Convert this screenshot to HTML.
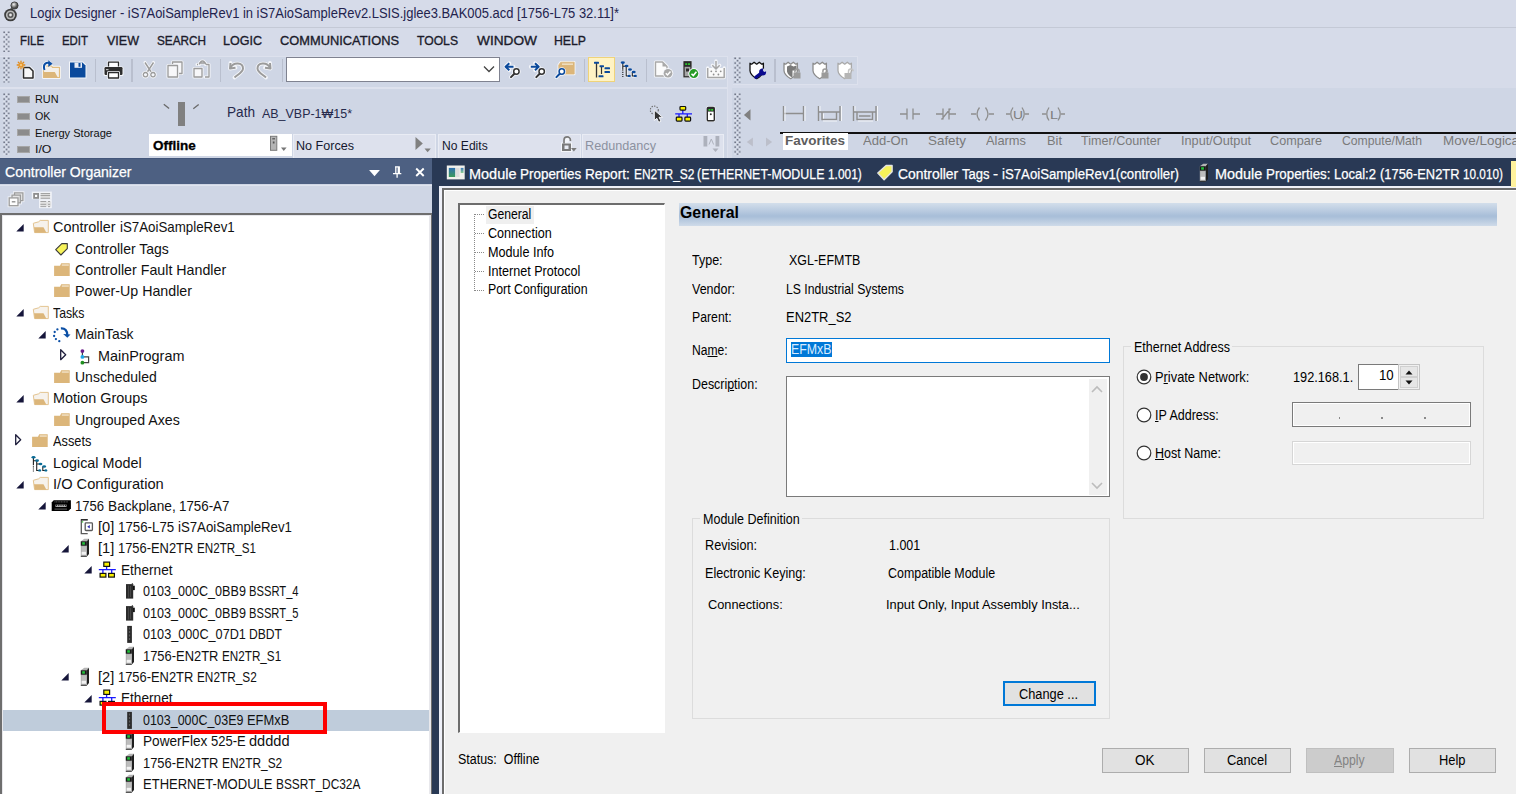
<!DOCTYPE html>
<html><head><meta charset="utf-8"><title>Logix Designer</title>
<style>
html,body{margin:0;padding:0}
body{width:1516px;height:794px;overflow:hidden;position:relative;background:#d6dbe9;font-family:"Liberation Sans","NanumGothic",sans-serif;}
div,span.t,svg{position:absolute;box-sizing:border-box}
span.t{white-space:pre;line-height:1;transform-origin:0 50%;color:#000}
u{text-decoration:underline;text-underline-offset:1px}
</style></head><body>
<div style="left:0px;top:0px;width:1516px;height:27px;background:#d6dbe9"></div>
<div style="left:0px;top:26.5px;width:1516px;height:1.5px;background:#c4c9d6"></div>
<svg style="left:3px;top:1px" width="18" height="22" viewBox="0 0 18 22">
<defs><radialGradient id="gm" cx="40%" cy="35%"><stop offset="0" stop-color="#f2f2f2"/><stop offset="1" stop-color="#4a4a4a"/></radialGradient></defs>
<circle cx="11.500" cy="4.500" r="3.600" fill="url(#gm)" stroke="#333" stroke-width="0.800"/>
<path d="M9.500 7.500 L7 10" stroke="#555" stroke-width="2.500"/>
<circle cx="7.500" cy="14" r="6.300" fill="#3c3c3c"/><circle cx="7.500" cy="14" r="4.600" fill="#b9b9b9"/><circle cx="7.500" cy="14" r="3" fill="#555"/><circle cx="7.500" cy="14" r="1.400" fill="#e6e6e6"/>
</svg>
<span class="t" style="left:30px;top:6px;font-size:14px;color:#23234e;transform:scaleX(0.9244);">Logix Designer - iS7AoiSampleRev1 in iS7AioSampleRev2.LSIS.jglee3.BAK005.acd [1756-L75 32.11]*</span>
<svg style="left:3px;top:30.5px" width="7" height="21"><defs><pattern id="gp1" width="4.600" height="4.800" patternUnits="userSpaceOnUse"><rect x="0.400" y="0.500" width="1.500" height="1.500" fill="#5f6476"/><rect x="2.700" y="2.900" width="1.500" height="1.500" fill="#5f6476"/><rect x="2.700" y="0.500" width="1.500" height="1.500" fill="#e3e7f0"/><rect x="0.400" y="2.900" width="1.500" height="1.500" fill="#e3e7f0"/></pattern></defs><rect width="7" height="21" fill="url(#gp1)"/></svg>
<span class="t" style="left:20px;top:34px;font-size:13px;color:#1b1b2b;transform:scaleX(0.8737);-webkit-text-stroke:0.350px #1b1b2b;">FILE</span>
<span class="t" style="left:62px;top:34px;font-size:13px;color:#1b1b2b;transform:scaleX(0.8776);-webkit-text-stroke:0.350px #1b1b2b;">EDIT</span>
<span class="t" style="left:107px;top:34px;font-size:13px;color:#1b1b2b;transform:scaleX(0.9629);-webkit-text-stroke:0.350px #1b1b2b;">VIEW</span>
<span class="t" style="left:157px;top:34px;font-size:13px;color:#1b1b2b;transform:scaleX(0.9043);-webkit-text-stroke:0.350px #1b1b2b;">SEARCH</span>
<span class="t" style="left:223px;top:34px;font-size:13px;color:#1b1b2b;transform:scaleX(0.9637);-webkit-text-stroke:0.350px #1b1b2b;">LOGIC</span>
<span class="t" style="left:280px;top:34px;font-size:13px;color:#1b1b2b;transform:scaleX(0.9886);-webkit-text-stroke:0.350px #1b1b2b;">COMMUNICATIONS</span>
<span class="t" style="left:417px;top:34px;font-size:13px;color:#1b1b2b;transform:scaleX(0.9351);-webkit-text-stroke:0.350px #1b1b2b;">TOOLS</span>
<span class="t" style="left:477px;top:34px;font-size:13px;color:#1b1b2b;transform:scaleX(1.0518);-webkit-text-stroke:0.350px #1b1b2b;">WINDOW</span>
<span class="t" style="left:554px;top:34px;font-size:13px;color:#1b1b2b;transform:scaleX(0.9420);-webkit-text-stroke:0.350px #1b1b2b;">HELP</span>
<div style="left:0px;top:55.5px;width:728px;height:32px;background:#cfd6e5;border:1px solid #dde1ed;border-left:0"></div>
<div style="left:732.5px;top:55.5px;width:125.5px;height:29.5px;background:#cfd6e5;border:1px solid #dde1ed;border-left:0"></div>
<svg style="left:3px;top:57px" width="7" height="25.5"><defs><pattern id="gp2" width="4.600" height="4.800" patternUnits="userSpaceOnUse"><rect x="0.400" y="0.500" width="1.500" height="1.500" fill="#5f6476"/><rect x="2.700" y="2.900" width="1.500" height="1.500" fill="#5f6476"/><rect x="2.700" y="0.500" width="1.500" height="1.500" fill="#e3e7f0"/><rect x="0.400" y="2.900" width="1.500" height="1.500" fill="#e3e7f0"/></pattern></defs><rect width="7" height="25.5" fill="url(#gp2)"/></svg>
<svg style="left:734.4px;top:57px" width="7" height="25.5"><defs><pattern id="gp3" width="4.600" height="4.800" patternUnits="userSpaceOnUse"><rect x="0.400" y="0.500" width="1.500" height="1.500" fill="#5f6476"/><rect x="2.700" y="2.900" width="1.500" height="1.500" fill="#5f6476"/><rect x="2.700" y="0.500" width="1.500" height="1.500" fill="#e3e7f0"/><rect x="0.400" y="2.900" width="1.500" height="1.500" fill="#e3e7f0"/></pattern></defs><rect width="7" height="25.5" fill="url(#gp3)"/></svg>
<div style="left:94.5px;top:58.5px;width:1.5px;height:23px;background:#b9bfce"></div>
<div style="left:131px;top:58.5px;width:1.5px;height:23px;background:#b9bfce"></div>
<div style="left:219.5px;top:58.5px;width:1.5px;height:23px;background:#b9bfce"></div>
<div style="left:281.5px;top:58.5px;width:1.5px;height:23px;background:#b9bfce"></div>
<div style="left:583.5px;top:58.5px;width:1.5px;height:23px;background:#b9bfce"></div>
<div style="left:645.5px;top:58.5px;width:1.5px;height:23px;background:#b9bfce"></div>
<div style="left:774px;top:58.5px;width:1.5px;height:23px;background:#b9bfce"></div>
<div style="left:286px;top:57px;width:214px;height:25px;background:#fff;border:1px solid #7f8290"></div>
<svg style="left:483px;top:65px" width="12" height="9" viewBox="0 0 12 9"><path d="M1 1.500 L6 6.500 L11 1.500" fill="none" stroke="#444" stroke-width="1.300"/></svg>
<div style="left:588px;top:57px;width:26.5px;height:25px;background:#fff3c4;border:1px solid #efd37a"></div>
<svg style="left:14px;top:58px" width="24" height="24" viewBox="0 0 24 24"><path d="M9.500 9.500 h6 l3.500 3.500 v7 h-9.500 z" fill="#f7f7f7" stroke="#f4f6fa" stroke-width="3.3" stroke-linejoin="round" stroke-linecap="round"/><path d="M9.500 9.500 h6 l3.500 3.500 v7 h-9.500 z" fill="#f7f7f7" stroke="#2b2b2b" stroke-width="1.5" stroke-linejoin="round"/><g stroke="#e08a1a" stroke-width="1.300" stroke-linecap="round"><path d="M7 3.200 v7.600 M3.200 7 h7.600 M4.300 4.300 l5.400 5.400 M9.700 4.300 l-5.400 5.400"/></g><circle cx="7" cy="7" r="2.300" fill="#e89a2e"/><circle cx="7" cy="7" r="0.900" fill="#f7d9a0"/></svg>
<svg style="left:40px;top:58px" width="24" height="24" viewBox="0 0 24 24"><path d="M3.500 8 h8 l1 1.300 h7 v10.200 h-16 z" fill="#f4f0ea" stroke="#f4f6fa" stroke-width="3.0" stroke-linejoin="round" stroke-linecap="round"/><path d="M3.500 8 h8 l1 1.300 h7 v10.200 h-16 z" fill="#f4f0ea" stroke="#e2bd7e" stroke-width="1.2" stroke-linejoin="round"/><path d="M3.300 14 h11.500 l3.200 5.800 h-14.500 z" fill="#dcb67a"/><path d="M4.500 12 C2.500 6 6.500 3.800 10.500 5.500" fill="none" stroke="#f4f6fa" stroke-width="3.600"/><path d="M4.500 12 C2.500 6 6.500 3.800 10 5.300" fill="none" stroke="#0b4fa5" stroke-width="2"/><path d="M8.300 2.300 L12.500 5.800 L8.300 9 Z" fill="#0b4fa5"/></svg>
<svg style="left:67px;top:58px" width="24" height="24" viewBox="0 0 24 24"><path d="M2 3.500 h14 l3.500 3.500 v13.500 h-17.500 z" fill="#f4f6fa"/><path d="M3 4.500 h12.500 l3 3 v12 h-15.500 z" fill="#0b4a9c"/><rect x="7.500" y="4.500" width="7.500" height="5.300" fill="#e9edf6"/><rect x="11.500" y="5" width="2" height="3.800" fill="#0b4a9c"/></svg>
<svg style="left:101px;top:58px" width="24" height="24" viewBox="0 0 24 24"><path d="M7.500 9 v-4.800 h10 v4.800" fill="#fff" stroke="#f4f6fa" stroke-width="3.1" stroke-linejoin="round" stroke-linecap="round"/><path d="M7.500 9 v-4.800 h10 v4.800" fill="#fff" stroke="#2b2b2b" stroke-width="1.3" stroke-linejoin="round"/><rect x="2.500" y="8.500" width="20" height="9.500" rx="1.500" fill="#f4f6fa"/><rect x="3.500" y="9" width="18" height="8" rx="1.200" fill="#2d2d2d"/><rect x="5" y="11" width="2.500" height="1.200" fill="#bbb"/><path d="M7.500 14.500 h10 v5.500 h-10 z" fill="#fff" stroke="#f4f6fa" stroke-width="3.1" stroke-linejoin="round" stroke-linecap="round"/><path d="M7.500 14.500 h10 v5.500 h-10 z" fill="#fff" stroke="#2b2b2b" stroke-width="1.3" stroke-linejoin="round"/></svg>
<svg style="left:137px;top:58px" width="24" height="24" viewBox="0 0 24 24"><path d="M8 4.500 L14.500 14.500 M16.500 4.500 L10 14.500" fill="none" stroke="#f4f6fa" stroke-width="3.2" stroke-linejoin="round" stroke-linecap="round"/><path d="M8 4.500 L14.500 14.500 M16.500 4.500 L10 14.500" fill="none" stroke="#9b9b9b" stroke-width="1.4" stroke-linejoin="round"/><path d="M8.500 14.500 a2.200 2.200 0 1 0 0.010 0 z M16 14.500 a2.200 2.200 0 1 0 0.010 0 z" fill="#f4f6fa" stroke="#f4f6fa" stroke-width="3.1" stroke-linejoin="round" stroke-linecap="round"/><path d="M8.500 14.500 a2.200 2.200 0 1 0 0.010 0 z M16 14.500 a2.200 2.200 0 1 0 0.010 0 z" fill="#f4f6fa" stroke="#9b9b9b" stroke-width="1.3" stroke-linejoin="round"/></svg>
<svg style="left:163px;top:58px" width="24" height="24" viewBox="0 0 24 24"><path d="M9.500 4 h9.500 v11.500 h-9.500 z" fill="#f7f7f9" stroke="#f4f6fa" stroke-width="3.1" stroke-linejoin="round" stroke-linecap="round"/><path d="M9.500 4 h9.500 v11.500 h-9.500 z" fill="#f7f7f9" stroke="#9b9b9b" stroke-width="1.3" stroke-linejoin="round"/><path d="M5 7.500 h9.500 v11.500 h-9.500 z" fill="#f7f7f9" stroke="#f4f6fa" stroke-width="3.1" stroke-linejoin="round" stroke-linecap="round"/><path d="M5 7.500 h9.500 v11.500 h-9.500 z" fill="#f7f7f9" stroke="#9b9b9b" stroke-width="1.3" stroke-linejoin="round"/></svg>
<svg style="left:189px;top:58px" width="24" height="24" viewBox="0 0 24 24"><path d="M9 6.500 h-1 M17 6.500 h3 v12.500 h-4 M10.500 6.500 v-1.500 h6 v1.500 M11.500 5 a2 2 0 0 1 4 0" fill="none" stroke="#f4f6fa" stroke-width="3.1" stroke-linejoin="round" stroke-linecap="round"/><path d="M9 6.500 h-1 M17 6.500 h3 v12.500 h-4 M10.500 6.500 v-1.500 h6 v1.500 M11.500 5 a2 2 0 0 1 4 0" fill="none" stroke="#9b9b9b" stroke-width="1.3" stroke-linejoin="round"/><path d="M5 10.500 h8 v8.500 h-8 z" fill="#f7f7f9" stroke="#f4f6fa" stroke-width="3.1" stroke-linejoin="round" stroke-linecap="round"/><path d="M5 10.500 h8 v8.500 h-8 z" fill="#f7f7f9" stroke="#9b9b9b" stroke-width="1.3" stroke-linejoin="round"/></svg>
<svg style="left:224px;top:58px" width="24" height="24" viewBox="0 0 24 24"><path d="M6.500 5 l-0.500 5.500 l5.500 -0.800 M6.200 10.300 C9.500 3.500 19 4.500 19 10.500 C19 14 14 16.500 10.500 19.500" fill="none" stroke="#f4f6fa" stroke-width="3.8" stroke-linejoin="round" stroke-linecap="round"/><path d="M6.500 5 l-0.500 5.500 l5.500 -0.800 M6.200 10.300 C9.500 3.500 19 4.500 19 10.500 C19 14 14 16.500 10.500 19.500" fill="none" stroke="#9b9b9b" stroke-width="2" stroke-linejoin="round"/></svg>
<svg style="left:252px;top:58px" width="24" height="24" viewBox="0 0 24 24"><path d="M18 5 l0.500 5.500 l-5.500 -0.800 M18.300 10.300 C15 3.500 5.500 4.500 5.500 10.500 C5.500 14 10.500 16.500 14 19.500" fill="none" stroke="#f4f6fa" stroke-width="3.8" stroke-linejoin="round" stroke-linecap="round"/><path d="M18 5 l0.500 5.500 l-5.500 -0.800 M18.300 10.300 C15 3.500 5.500 4.500 5.500 10.500 C5.500 14 10.500 16.500 14 19.500" fill="none" stroke="#9b9b9b" stroke-width="2" stroke-linejoin="round"/></svg>
<svg style="left:500px;top:58px" width="24" height="24" viewBox="0 0 24 24"><path d="M13.500 8.700 h-7.500 M9.300 5.200 L5.600 8.700 L9.300 12.200" fill="none" stroke="#f4f6fa" stroke-width="3.8" stroke-linejoin="round" stroke-linecap="round"/><path d="M13.500 8.700 h-7.500 M9.300 5.200 L5.600 8.700 L9.300 12.200" fill="none" stroke="#0b4a9c" stroke-width="2" stroke-linejoin="round"/><path d="M14.599999999999998 15.5 l-3.600 3.600" stroke="#f4f6fa" stroke-width="3.800" stroke-linecap="round"/><circle cx="16.4" cy="13.5" r="2.700" fill="#f4f6fa" stroke="#f4f6fa" stroke-width="3.200"/><path d="M14.599999999999998 15.5 l-3.600 3.600" stroke="#333" stroke-width="2" stroke-linecap="round"/><circle cx="16.4" cy="13.5" r="2.700" fill="#fdfdfd" stroke="#333" stroke-width="1.500"/></svg>
<svg style="left:526px;top:58px" width="24" height="24" viewBox="0 0 24 24"><path d="M4.800 8.700 h7.500 M9 5.200 L12.700 8.700 L9 12.200" fill="none" stroke="#f4f6fa" stroke-width="3.8" stroke-linejoin="round" stroke-linecap="round"/><path d="M4.800 8.700 h7.500 M9 5.200 L12.700 8.700 L9 12.200" fill="none" stroke="#0b4a9c" stroke-width="2" stroke-linejoin="round"/><path d="M13.899999999999999 15.5 l-3.600 3.600" stroke="#f4f6fa" stroke-width="3.800" stroke-linecap="round"/><circle cx="15.7" cy="13.5" r="2.700" fill="#f4f6fa" stroke="#f4f6fa" stroke-width="3.200"/><path d="M13.899999999999999 15.5 l-3.600 3.600" stroke="#333" stroke-width="2" stroke-linecap="round"/><circle cx="15.7" cy="13.5" r="2.700" fill="#fdfdfd" stroke="#333" stroke-width="1.500"/></svg>
<svg style="left:552px;top:58px" width="24" height="24" viewBox="0 0 24 24"><path d="M6.800 7 l2 -2.800 h13.400 v11.800 h-15.400 z" fill="#dcb67a" stroke="#f4f6fa" stroke-width="2.6" stroke-linejoin="round" stroke-linecap="round"/><path d="M6.800 7 l2 -2.800 h13.400 v11.800 h-15.400 z" fill="#dcb67a" stroke="#dcb67a" stroke-width="0.8" stroke-linejoin="round"/><rect x="10" y="5.500" width="11" height="1.300" fill="#f3e6cf"/><path d="M8.0 15.5 l-3.600 3.600" stroke="#f4f6fa" stroke-width="3.800" stroke-linecap="round"/><circle cx="9.8" cy="13.5" r="2.700" fill="#f4f6fa" stroke="#f4f6fa" stroke-width="3.200"/><path d="M8.0 15.5 l-3.600 3.600" stroke="#0b4a9c" stroke-width="2" stroke-linecap="round"/><circle cx="9.8" cy="13.5" r="2.700" fill="#fdfdfd" stroke="#0b4a9c" stroke-width="1.500"/></svg>
<svg style="left:589px;top:58px" width="24" height="24" viewBox="0 0 24 24"><path d="M7.500 4.500 v15" stroke="#333" stroke-width="1.300"/><path d="M12.500 9 v7" stroke="#333" stroke-width="1.200"/><g fill="#0b4a9c"><rect x="5" y="3.800" width="5" height="2" rx="0.600"/><rect x="10.500" y="7.200" width="4.500" height="2" rx="0.600"/><rect x="15.500" y="9.300" width="5.500" height="2" rx="0.600"/><rect x="15.500" y="13" width="5.500" height="2" rx="0.600"/><rect x="9.500" y="17.300" width="5" height="2" rx="0.600"/></g></svg>
<svg style="left:616px;top:58px" width="24" height="24" viewBox="0 0 24 24"><path d="M6.800 4.500 V11.500 M6.800 8.300 H10 M10.200 8.500 V18 H13 M13.500 11.700 H14.500 M16.300 14 V18 H19" fill="none" stroke="#f4f6fa" stroke-width="2.9000000000000004" stroke-linejoin="round" stroke-linecap="round"/><path d="M6.800 4.500 V11.500 M6.800 8.300 H10 M10.200 8.500 V18 H13 M13.500 11.700 H14.500 M16.300 14 V18 H19" fill="none" stroke="#222" stroke-width="1.1" stroke-linejoin="round"/><path d="M6.800 11.500 V19" stroke="#222" stroke-width="1.100" stroke-dasharray="1.200 1"/><g fill="#0b4a9c"><ellipse cx="6.800" cy="4.600" rx="2.100" ry="1.300"/><ellipse cx="10.500" cy="8" rx="2" ry="1.300"/><ellipse cx="14" cy="11.500" rx="2" ry="1.300"/><ellipse cx="17.700" cy="14" rx="2" ry="1.300"/><ellipse cx="13.200" cy="17.900" rx="1.600" ry="1.200"/><ellipse cx="19.300" cy="17.900" rx="1.600" ry="1.200"/></g></svg>
<svg style="left:650px;top:58px" width="24" height="24" viewBox="0 0 24 24"><path d="M5.500 4 h7 l4.500 4.500 v9.500 h-11.500 z" fill="#fbfbfb" stroke="#f4f6fa" stroke-width="3.2" stroke-linejoin="round" stroke-linecap="round"/><path d="M5.500 4 h7 l4.500 4.500 v9.500 h-11.500 z" fill="#fbfbfb" stroke="#a9a9a9" stroke-width="1.4" stroke-linejoin="round"/><path d="M12.500 4 v4.500 h4.500 z" fill="#a9a9a9"/><circle cx="18" cy="15.200" r="5.300" fill="#f4f6fa"/><circle cx="18" cy="15.200" r="4.300" fill="#a9a9a9"/><path d="M15.800 15.300 l1.700 1.700 l3 -3.600" stroke="#fff" stroke-width="1.500" fill="none"/></svg>
<svg style="left:678px;top:58px" width="24" height="24" viewBox="0 0 24 24"><rect x="5" y="2.800" width="9" height="17" rx="1" fill="#f4f6fa"/><rect x="6" y="3.800" width="7" height="15" fill="#a6a6a6" stroke="#2b2b2b" stroke-width="1.300"/><rect x="6" y="3.800" width="7" height="5" fill="#2b2b2b"/><rect x="7.200" y="5.300" width="2" height="1.600" fill="#2fd02f"/><rect x="10" y="5.300" width="2" height="1.600" fill="#2fd02f"/><rect x="8" y="10.500" width="3" height="3" fill="#2b2b2b"/><circle cx="15.800" cy="15.600" r="5.500" fill="#f4f6fa"/><circle cx="15.800" cy="15.600" r="4.500" fill="#259b25"/><path d="M13.500 15.700 l1.800 1.800 l3.100 -3.800" stroke="#fff" stroke-width="1.600" fill="none"/></svg>
<svg style="left:704px;top:58px" width="24" height="24" viewBox="0 0 24 24"><path d="M3.700 10 v9.500 h16.500 v-9.500" fill="#fafafa" stroke="#f4f6fa" stroke-width="3.3" stroke-linejoin="round" stroke-linecap="round"/><path d="M3.700 10 v9.500 h16.500 v-9.500" fill="#fafafa" stroke="#a6a6a6" stroke-width="1.5" stroke-linejoin="round"/><path d="M12 3 v8 M8.300 7.300 L12 11 L15.700 7.300" fill="none" stroke="#f4f6fa" stroke-width="3.3" stroke-linejoin="round" stroke-linecap="round"/><path d="M12 3 v8 M8.300 7.300 L12 11 L15.700 7.300" fill="none" stroke="#a6a6a6" stroke-width="1.5" stroke-linejoin="round"/><g fill="#8f8f8f"><circle cx="7.300" cy="13.300" r="0.900"/><circle cx="12" cy="13.300" r="0.900"/><circle cx="16.700" cy="13.300" r="0.900"/><circle cx="9.600" cy="16.500" r="0.900"/><circle cx="14.400" cy="16.500" r="0.900"/></g></svg>
<svg style="left:744.5px;top:58px" width="24" height="24" viewBox="0 0 24 24"><path d="M5 5.200 l1.600 1 l2.500 -2 l2.600 2 l2.600 -2 l2.500 2 l1.600 -1 v7.500 q-0.300 4.300 -6.700 8 q-6.400 -3.700 -6.700 -8 z" fill="#fff" stroke="#111" stroke-width="1.300" stroke-linejoin="round"/><path d="M10.800 19.300 L16 15.400" stroke="#0a0a8f" stroke-width="3.200" stroke-linecap="round"/><circle cx="17.600" cy="14.100" r="3.500" fill="#0a0a8f"/><circle cx="19.700" cy="12.100" r="1.800" fill="#cfd6e5"/></svg>
<svg style="left:779px;top:58px" width="24" height="24" viewBox="0 0 24 24"><path d="M5 5.200 l1.600 1 l2.500 -2 l2.600 2 l2.600 -2 l2.500 2 l1.600 -1 v7.500 q-0.300 4.300 -6.700 8 q-6.400 -3.700 -6.700 -8 z" fill="#fff" stroke="#8c8c8c" stroke-width="1.300" stroke-linejoin="round"/><path d="M8 8.500 l3.500 -1.500 l3 1.500 l3 -1 v5 h-4 v7 q-4.500 -2 -5.500 -6 z" fill="#7a7a7a"/><rect x="14.5" y="14.500" width="7" height="6" fill="#9a9a9a"/><path d="M15.9 14.500 v-1.300 a2.100 2.100 0 0 1 4.200 0 v1.300" fill="none" stroke="#9a9a9a" stroke-width="1.500"/></svg>
<svg style="left:807.5px;top:58px" width="24" height="24" viewBox="0 0 24 24"><path d="M5 5.200 l1.600 1 l2.500 -2 l2.600 2 l2.600 -2 l2.500 2 l1.600 -1 v7.500 q-0.300 4.300 -6.700 8 q-6.400 -3.700 -6.700 -8 z" fill="#fff" stroke="#8c8c8c" stroke-width="1.300" stroke-linejoin="round"/><rect x="13.5" y="14.500" width="7" height="6" fill="#9a9a9a"/><path d="M14.9 14.500 v-1.300 a2.100 2.100 0 0 1 4.200 0 v1.300" fill="none" stroke="#9a9a9a" stroke-width="1.500"/></svg>
<svg style="left:833px;top:58px" width="24" height="24" viewBox="0 0 24 24"><path d="M5 5.200 l1.600 1 l2.500 -2 l2.600 2 l2.600 -2 l2.500 2 l1.600 -1 v7.500 q-0.300 4.300 -6.700 8 q-6.400 -3.700 -6.700 -8 z" fill="#fff" stroke="#a9a9a9" stroke-width="1.300" stroke-linejoin="round"/><rect x="11.500" y="15" width="7" height="6" fill="#b5b5b5"/><path d="M15.500 15 v-1.800 a2.300 2.300 0 0 1 4.600 0" fill="none" stroke="#c4c4c4" stroke-width="1.500"/></svg>
<div style="left:0px;top:87.3px;width:728px;height:70.7px;background:#cfd6e5;border-top:2.200px solid #dde1ed;border-right:1px solid #dde1ed"></div>
<div style="left:732px;top:88px;width:784px;height:70px;background:#cfd6e5"></div>
<svg style="left:3px;top:92.5px" width="7" height="62"><defs><pattern id="gp4" width="4.600" height="4.800" patternUnits="userSpaceOnUse"><rect x="0.400" y="0.500" width="1.500" height="1.500" fill="#5f6476"/><rect x="2.700" y="2.900" width="1.500" height="1.500" fill="#5f6476"/><rect x="2.700" y="0.500" width="1.500" height="1.500" fill="#e3e7f0"/><rect x="0.400" y="2.900" width="1.500" height="1.500" fill="#e3e7f0"/></pattern></defs><rect width="7" height="62" fill="url(#gp4)"/></svg>
<svg style="left:734.4px;top:92.5px" width="7" height="62"><defs><pattern id="gp5" width="4.600" height="4.800" patternUnits="userSpaceOnUse"><rect x="0.400" y="0.500" width="1.500" height="1.500" fill="#5f6476"/><rect x="2.700" y="2.900" width="1.500" height="1.500" fill="#5f6476"/><rect x="2.700" y="0.500" width="1.500" height="1.500" fill="#e3e7f0"/><rect x="0.400" y="2.900" width="1.500" height="1.500" fill="#e3e7f0"/></pattern></defs><rect width="7" height="62" fill="url(#gp5)"/></svg>
<div style="left:17px;top:95.9px;width:13px;height:7px;background:#8c8c8c;border:1px solid #a6a6a6"></div>
<span class="t" style="left:34.5px;top:94px;font-size:11.5px;color:#111;transform:scaleX(0.9429);">RUN</span>
<div style="left:17px;top:112.6px;width:13px;height:7px;background:#8c8c8c;border:1px solid #a6a6a6"></div>
<span class="t" style="left:34.5px;top:111px;font-size:11.5px;color:#111;transform:scaleX(0.9323);">OK</span>
<div style="left:17px;top:129.3px;width:13px;height:7px;background:#8c8c8c;border:1px solid #a6a6a6"></div>
<span class="t" style="left:34.5px;top:128px;font-size:11.5px;color:#111;transform:scaleX(0.9634);">Energy Storage</span>
<div style="left:17px;top:146.0px;width:13px;height:7px;background:#8c8c8c;border:1px solid #a6a6a6"></div>
<span class="t" style="left:34.5px;top:144px;font-size:11.5px;color:#111;transform:scaleX(1.0754);">I/O</span>
<div style="left:177.5px;top:102.3px;width:7.5px;height:23.5px;background:#808080"></div>
<svg style="left:162px;top:102px" width="40" height="10" viewBox="0 0 40 10"><path d="M1.800 2.200 l5.300 4.400 M36.700 2.500 l-5.400 4.300" stroke="#6a6a6a" stroke-width="1.300"/></svg>
<span class="t" style="left:227px;top:104px;font-size:15px;color:#262a4c;transform:scaleX(0.9073);">Path</span>
<span class="t" style="left:262px;top:108px;font-size:12.5px;color:#262a4c;transform:scaleX(0.9964);">AB_VBP-1₩15*</span>
<div style="left:149px;top:133.5px;width:142.5px;height:22.5px;background:#fff"></div>
<span class="t" style="left:152.5px;top:139px;font-size:13px;font-weight:bold;transform:scaleX(1.0371);-webkit-text-stroke:0.300px #000;">Offline</span>
<svg style="left:268px;top:134px" width="22" height="20" viewBox="0 0 22 20"><rect x="2.500" y="2.300" width="6.300" height="14" fill="#b4b4b4" stroke="#7a7a7a" stroke-width="1"/><rect x="4.300" y="4" width="2.700" height="1.500" fill="#666"/><rect x="4.800" y="7.500" width="1.700" height="2" fill="#555"/><path d="M13 13.500 h5.600 l-2.800 3.500 z" fill="#777"/></svg>
<div style="left:293px;top:133.5px;width:142.5px;height:24.5px;background:#dde1ed;border:1.500px solid #e9ecf4;border-bottom:0"></div>
<div style="left:437.5px;top:133.5px;width:143px;height:24.5px;background:#dde1ed;border:1.500px solid #e9ecf4;border-bottom:0"></div>
<div style="left:582px;top:133.5px;width:142px;height:24.5px;background:#dde1ed;border:1.500px solid #e9ecf4;border-bottom:0"></div>
<span class="t" style="left:296px;top:139px;font-size:13px;color:#15192f;transform:scaleX(0.9672);">No Forces</span>
<svg style="left:413px;top:135px" width="22" height="20" viewBox="0 0 22 20"><path d="M2.500 2 v13 l7.300 -6.500 z" fill="#808080"/><path d="M11.500 13.500 h6.300 l-3.150 3.700 z" fill="#808080"/></svg>
<span class="t" style="left:442px;top:139px;font-size:13px;color:#15192f;transform:scaleX(0.9300);">No Edits</span>
<svg style="left:558px;top:134px" width="22" height="20" viewBox="0 0 22 20"><g stroke="#f4f6fa" stroke-width="2" fill="#f4f6fa"><path d="M6 9.500 v-3.500 a3.200 3.200 0 0 1 6.400 0 v1"/><rect x="4" y="9.500" width="9" height="7.500"/></g><path d="M6 9.500 v-3.500 a3.200 3.200 0 0 1 6.400 0 v1" fill="none" stroke="#7a7a7a" stroke-width="1.700"/><rect x="4" y="9.500" width="9" height="7.500" fill="#7a7a7a"/><rect x="6.500" y="11.500" width="4" height="3.500" fill="#e9ecf4"/><path d="M13 14 h5.700 l-2.850 3.500 z" fill="#7a7a7a"/></svg>
<span class="t" style="left:585px;top:139px;font-size:13px;color:#8c91a0;transform:scaleX(0.9726);">Redundancy</span>
<svg style="left:702px;top:135px" width="22" height="20" viewBox="0 0 22 20"><rect x="1.500" y="1" width="3.800" height="10.500" fill="#adb1bc"/><rect x="13.500" y="1" width="3.800" height="10.500" fill="#adb1bc"/><path d="M7 9.500 l2.300 -5.500 l2.300 5.500" stroke="#adb1bc" fill="none"/><path d="M10.500 13.500 h6 l-3 3.500 z" fill="#adb1bc"/></svg>
<svg style="left:646px;top:102px" width="22" height="22" viewBox="0 0 22 22"><g fill="none" stroke="#6a6a6a" stroke-width="1.100" stroke-dasharray="1.300 1.300"><circle cx="8.300" cy="8.100" r="4"/></g><path d="M8.300 8.100 v10.500 l2.500 -2.300 l1.900 4 l2.300 -1.100 l-1.900 -3.900 h3.600 z" fill="#333" stroke="#f4f6fa" stroke-width="1" stroke-linejoin="round"/></svg>
<svg style="left:672px;top:102px" width="22" height="22" viewBox="0 0 22 22"><path d="M10.800 8 v3.800 M7 11.800 v3.500 M15.300 11.800 v3.500 M3.200 11.800 H20" stroke="#1a1aff" stroke-width="1.300" fill="none"/><rect x="8" y="4.500" width="5.700" height="3.600" rx="0.800" fill="#f7ef00" stroke="#111" stroke-width="1.200"/><rect x="4.300" y="15.100" width="5.700" height="4" rx="0.800" fill="#f7ef00" stroke="#111" stroke-width="1.200"/><rect x="12.900" y="15.100" width="5.700" height="4" rx="0.800" fill="#f7ef00" stroke="#111" stroke-width="1.200"/></svg>
<svg style="left:703px;top:102px" width="16" height="22" viewBox="0 0 16 22"><rect x="3.200" y="4.300" width="9.200" height="15.600" rx="1.800" fill="#f4f6fa"/><rect x="4.300" y="5.400" width="7" height="13.400" rx="1" fill="#fff" stroke="#2e2e2e" stroke-width="1.400"/><rect x="4.300" y="5.400" width="7" height="4.200" fill="#2e2e2e"/><rect x="5.500" y="7" width="1.900" height="1.700" fill="#2fd02f"/><rect x="8.200" y="7" width="1.900" height="1.700" fill="#2fd02f"/><circle cx="7.800" cy="12.200" r="1" fill="#2e2e2e"/></svg>
<svg style="left:743px;top:108px" width="9" height="14" viewBox="0 0 9 14"><path d="M7.500 1.300 v11.200 l-6.600 -5.600 z" fill="#808080"/></svg>
<svg style="left:746px;top:136px" width="8" height="12" viewBox="0 0 8 12"><path d="M6.900 1.600 v9 l-6.100 -4.500 z" fill="#bcbfca"/></svg>
<svg style="left:765px;top:136px" width="8" height="12" viewBox="0 0 8 12"><path d="M1 1.600 v9 l6.100 -4.500 z" fill="#bcbfca"/></svg>
<svg style="left:782px;top:105px" width="24" height="18" viewBox="0 0 24 18"><path d="M1.500 1 v15 M21.500 1 v15 M1.500 8.500 h20" stroke="#8e8e8e" stroke-width="1.400" fill="none"/><path d="M3 1 v15 M23 1 v15" stroke="#f4f6fa" stroke-width="1" fill="none"/></svg>
<svg style="left:817px;top:105px" width="26" height="18" viewBox="0 0 26 18"><path d="M1.500 1 v15 M23 1 v15 M1.500 7 h21.500 M5 7 v7.500 h14.500 v-7.500" stroke="#8e8e8e" stroke-width="1.400" fill="none"/><path d="M3 1 v5 M24.500 1 v15 M6.500 8.500 v5 M6 16 h14" stroke="#f4f6fa" stroke-width="1" fill="none"/></svg>
<svg style="left:852px;top:105px" width="27" height="18" viewBox="0 0 27 18"><path d="M1.500 1 v15 M24 1 v15 M1.500 7 h22.500 M5 7 v7.500 h15.500 v-7.500 M7 11 h11.500" stroke="#8e8e8e" stroke-width="1.400" fill="none"/><path d="M3 1 v5 M25.500 1 v15 M6 16 h15" stroke="#f4f6fa" stroke-width="1" fill="none"/></svg>
<svg style="left:900px;top:107px" width="20" height="14" viewBox="0 0 20 14"><path d="M0 7 h7 M13 7 h7 M7 1.500 v11 M13 1.500 v11" stroke="#8e8e8e" stroke-width="1.300"/></svg>
<svg style="left:936px;top:107px" width="20" height="14" viewBox="0 0 20 14"><path d="M0 7 h7 M13 7 h7 M7 1.500 v11 M13 1.500 v11 M5.500 12.500 l9 -11" stroke="#8e8e8e" stroke-width="1.300"/></svg>
<svg style="left:971px;top:106px" width="23" height="16" viewBox="0 0 23 16"><path d="M0 8 h5 M18 8 h5 M8.500 1.500 q-5 6.500 0 13 M14.500 1.500 q5 6.500 0 13" stroke="#8e8e8e" stroke-width="1.300" fill="none"/></svg>
<svg style="left:1006px;top:106px" width="23" height="16" viewBox="0 0 23 16"><path d="M0 8 h4 M19 8 h4 M7 1.500 q-4.500 6.500 0 13 M16 1.500 q4.500 6.500 0 13" stroke="#8e8e8e" stroke-width="1.300" fill="none"/></svg>
<span class="t" style="left:1012.5px;top:110px;font-size:11.5px;color:#7d7d7d;transform:scaleX(1.2030);">U</span>
<svg style="left:1042px;top:106px" width="23" height="16" viewBox="0 0 23 16"><path d="M0 8 h4 M19 8 h4 M7 1.500 q-4.500 6.500 0 13 M16 1.500 q4.500 6.500 0 13" stroke="#8e8e8e" stroke-width="1.300" fill="none"/></svg>
<span class="t" style="left:1049.5px;top:110px;font-size:11.5px;color:#7d7d7d;transform:scaleX(1.2488);">L</span>
<div style="left:780px;top:131.5px;width:736px;height:2px;background:#111"></div>
<div style="left:782.5px;top:133px;width:65.5px;height:16.5px;background:#fff"></div>
<span class="t" style="left:785px;top:134px;font-size:13.5px;font-weight:bold;color:#5d5d5d;transform:scaleX(0.9995);">Favorites</span>
<span class="t" style="left:862.5px;top:134px;font-size:13.5px;color:#7a7a7a;transform:scaleX(0.9671);">Add-On</span>
<span class="t" style="left:927.5px;top:134px;font-size:13.5px;color:#7a7a7a;transform:scaleX(0.9927);">Safety</span>
<span class="t" style="left:986px;top:134px;font-size:13.5px;color:#7a7a7a;transform:scaleX(0.9520);">Alarms</span>
<span class="t" style="left:1046.5px;top:134px;font-size:13.5px;color:#7a7a7a;transform:scaleX(0.9514);">Bit</span>
<span class="t" style="left:1081px;top:134px;font-size:13.5px;color:#7a7a7a;transform:scaleX(0.9326);">Timer/Counter</span>
<span class="t" style="left:1181px;top:134px;font-size:13.5px;color:#7a7a7a;transform:scaleX(0.9420);">Input/Output</span>
<span class="t" style="left:1270px;top:134px;font-size:13.5px;color:#7a7a7a;transform:scaleX(0.9364);">Compare</span>
<span class="t" style="left:1342px;top:134px;font-size:13.5px;color:#7a7a7a;transform:scaleX(0.9035);">Compute/Math</span>
<span class="t" style="left:1443px;top:134px;font-size:13.5px;color:#7a7a7a;transform:scaleX(0.9931);">Move/Logical</span>
<div style="left:0px;top:158px;width:432px;height:26px;background:#4d6082;border-top:1px solid #43567a"></div>
<span class="t" style="left:5px;top:165px;font-size:14px;color:#fff;transform:scaleX(1.0035);-webkit-text-stroke:0.250px #fff;">Controller Organizer</span>
<svg style="left:367px;top:162px" width="16" height="18" viewBox="0 0 16 18"><path d="M2.100 7.900 H12.900 L7.500 14.200 Z" fill="#fff"/></svg>
<svg style="left:390px;top:162px" width="14" height="18" viewBox="0 0 14 18"><path d="M5 4.800 H9.800 M5.800 4.800 V11 M9.300 4.800 V11.500 M8.300 4.800 V11 M3 11.600 H11.300 M7.100 12 V15.800" stroke="#fff" stroke-width="1.300" fill="none"/></svg>
<svg style="left:412px;top:162px" width="16" height="18" viewBox="0 0 16 18"><path d="M4.200 6.500 L11.700 14 M11.700 6.500 L4.200 14" stroke="#fff" stroke-width="1.900"/></svg>
<div style="left:0px;top:183.5px;width:432px;height:30px;background:#cfd6e5"></div>
<div style="left:0px;top:184.5px;width:432px;height:1.5px;background:#dfe4ee"></div>
<svg style="left:6px;top:190px" width="20" height="18" viewBox="0 0 20 18"><g fill="#fdfdfd" stroke="#f1f3f8" stroke-width="3"><rect x="8.500" y="2.800" width="8.400" height="7.800"/><rect x="6" y="5.100" width="8.400" height="7.800"/><rect x="3.200" y="7.900" width="8.800" height="7.800"/></g><g fill="#fdfdfd" stroke="#9c9c9c" stroke-width="1.300"><path d="M8.500 5 V2.800 H16.900 V10.600 H14.600" fill="#e4e4e4"/><path d="M6 7.800 V5.100 H14.400 V12.900 H12.200" fill="#e4e4e4"/><rect x="3.200" y="7.900" width="8.800" height="7.800"/></g><path d="M5.800 11.800 H9.400" stroke="#8a8a8a" stroke-width="1.300"/></svg>
<svg style="left:31px;top:190px" width="22" height="19" viewBox="0 0 22 19"><rect x="0.800" y="1.600" width="20" height="7.600" fill="#f1f3f8"/><rect x="8" y="9.200" width="12.800" height="9" fill="#f1f3f8"/><rect x="2.200" y="3" width="5.800" height="5.800" fill="#8e8e8e"/><rect x="4" y="4.800" width="2.200" height="2.200" fill="#fff"/><rect x="9.600" y="3.800" width="9.500" height="4.300" fill="#dcdcdc"/><path d="M9.600 3.500 H19.100 M9.600 5.500 H19.100 M9.600 8.300 H19.100" stroke="#9a9a9a" stroke-width="0.900"/><rect x="9.400" y="11.700" width="10.700" height="4.600" fill="#e2e2e2"/><path d="M9.400 11.500 H15.200 M17 11.500 H19.100 M9.400 14.300 H15.200 M17 14.300 H19.100 M9.400 16.600 H15.200 M17 16.600 H19.100" stroke="#9a9a9a" stroke-width="0.900"/></svg>
<div style="left:0px;top:213px;width:432px;height:581px;background:#6e6e6e"></div>
<div style="left:2px;top:215px;width:429px;height:579px;background:#e8e8ec"></div>
<div style="left:3px;top:215.5px;width:426px;height:579px;background:#fff"></div>
<svg style="left:15px;top:222.6px" width="10" height="10" viewBox="0 0 10 10"><path d="M8.700 1 V8.400 H1.300 Z" fill="#16163a"/></svg>
<svg style="left:29px;top:217.1px" width="24" height="20" viewBox="0 0 24 20"><path d="M4.3 6.300 L9.700 4.800 L11.200 3.400 H19.300 V15.600 H5.600 Z" fill="#f6f2ec" stroke="#e3c491" stroke-width="1"/><path d="M5 10.200 H14.500 L17.400 15.800 H5.800 Z" fill="#dcb67a"/></svg>
<span class="t" style="left:53px;top:219px;font-size:15px;color:#111;transform:scaleX(0.9624);">Controller </span>
<span class="t" style="left:119.6px;top:219px;font-size:15px;color:#111;transform:scaleX(0.8874);">iS7AoiSampleRev1</span>
<svg style="left:51px;top:238.5px" width="24" height="20" viewBox="0 0 24 20"><path d="M4.700 10.700 L10.800 4.600 H16.300 V9.600 L9.900 16 Z" fill="#f7f35a" stroke="#3a3a3a" stroke-width="1.100" stroke-linejoin="round"/></svg>
<span class="t" style="left:75px;top:241px;font-size:15px;color:#111;transform:scaleX(0.9323);">Controller Tags</span>
<svg style="left:51px;top:259.9px" width="24" height="20" viewBox="0 0 24 20"><path d="M3.100 5.700 H9 L10.200 3.300 H18.700 V16.100 H3.100 Z" fill="#dcb67a"/><rect x="10.800" y="4.400" width="7" height="1.300" fill="#f3e6cf"/></svg>
<span class="t" style="left:75px;top:262px;font-size:15px;color:#111;transform:scaleX(0.9495);">Controller Fault Handler</span>
<svg style="left:51px;top:281.4px" width="24" height="20" viewBox="0 0 24 20"><path d="M3.100 5.700 H9 L10.200 3.300 H18.700 V16.100 H3.100 Z" fill="#dcb67a"/><rect x="10.800" y="4.400" width="7" height="1.300" fill="#f3e6cf"/></svg>
<span class="t" style="left:75px;top:283px;font-size:15px;color:#111;transform:scaleX(0.9482);">Power-Up Handler</span>
<svg style="left:15px;top:308.3px" width="10" height="10" viewBox="0 0 10 10"><path d="M8.700 1 V8.400 H1.300 Z" fill="#16163a"/></svg>
<svg style="left:29px;top:302.8px" width="24" height="20" viewBox="0 0 24 20"><path d="M4.3 6.300 L9.700 4.800 L11.200 3.400 H19.300 V15.600 H5.600 Z" fill="#f6f2ec" stroke="#e3c491" stroke-width="1"/><path d="M5 10.200 H14.500 L17.400 15.800 H5.800 Z" fill="#dcb67a"/></svg>
<span class="t" style="left:53px;top:305px;font-size:15px;color:#111;transform:scaleX(0.8189);">Tasks</span>
<svg style="left:37px;top:329.7px" width="10" height="10" viewBox="0 0 10 10"><path d="M8.700 1 V8.400 H1.300 Z" fill="#16163a"/></svg>
<svg style="left:51px;top:324.2px" width="24" height="20" viewBox="0 0 24 20"><g fill="#0b4fa5"><circle cx="6.400" cy="5.400" r="1.150"/><circle cx="3.700" cy="8" r="1.150"/><circle cx="3.100" cy="12" r="1.150"/><circle cx="4.900" cy="15.100" r="1.150"/><circle cx="8.300" cy="17.200" r="1.150"/></g><path d="M9.900 4.300 C14 4 16.500 7 16.300 11.500" fill="none" stroke="#0b4fa5" stroke-width="2.300"/><path d="M12.200 10 L16.300 13.800 L19.500 10.500 Z" fill="#0b4fa5"/></svg>
<span class="t" style="left:75px;top:326px;font-size:15px;color:#111;transform:scaleX(0.9233);">MainTask</span>
<svg style="left:59.4px;top:347.6px" width="9" height="14" viewBox="0 0 9 14"><path d="M1.700 1.700 V11.700 L6.700 6.700 Z" fill="#fff" stroke="#1e1e3c" stroke-width="1.300" stroke-linejoin="round"/></svg>
<svg style="left:74px;top:345.6px" width="24" height="20" viewBox="0 0 24 20"><path d="M8.400 5.100 V10.900 H14.600 V16.700 H8.400" stroke="#444" stroke-width="1.200" fill="none"/><circle cx="8.400" cy="5.100" r="1.900" fill="#6a1b8a"/><circle cx="8.400" cy="10.900" r="1.900" fill="#1ea7e8"/><circle cx="8.400" cy="16.700" r="1.900" fill="#1e8e1e"/></svg>
<span class="t" style="left:98px;top:348px;font-size:15px;color:#111;transform:scaleX(0.9597);">MainProgram</span>
<svg style="left:51px;top:367.0px" width="24" height="20" viewBox="0 0 24 20"><path d="M3.100 5.700 H9 L10.200 3.300 H18.700 V16.100 H3.100 Z" fill="#dcb67a"/><rect x="10.800" y="4.400" width="7" height="1.300" fill="#f3e6cf"/></svg>
<span class="t" style="left:75px;top:369px;font-size:15px;color:#111;transform:scaleX(0.9330);">Unscheduled</span>
<svg style="left:15px;top:394.0px" width="10" height="10" viewBox="0 0 10 10"><path d="M8.700 1 V8.400 H1.300 Z" fill="#16163a"/></svg>
<svg style="left:29px;top:388.5px" width="24" height="20" viewBox="0 0 24 20"><path d="M4.3 6.300 L9.700 4.800 L11.200 3.400 H19.300 V15.600 H5.600 Z" fill="#f6f2ec" stroke="#e3c491" stroke-width="1"/><path d="M5 10.200 H14.500 L17.400 15.800 H5.800 Z" fill="#dcb67a"/></svg>
<span class="t" style="left:53px;top:390px;font-size:15px;color:#111;transform:scaleX(0.9594);">Motion Groups</span>
<svg style="left:51px;top:409.9px" width="24" height="20" viewBox="0 0 24 20"><path d="M3.100 5.700 H9 L10.200 3.300 H18.700 V16.100 H3.100 Z" fill="#dcb67a"/><rect x="10.800" y="4.400" width="7" height="1.300" fill="#f3e6cf"/></svg>
<span class="t" style="left:75px;top:412px;font-size:15px;color:#111;transform:scaleX(0.9448);">Ungrouped Axes</span>
<svg style="left:14.4px;top:433.3px" width="9" height="14" viewBox="0 0 9 14"><path d="M1.700 1.700 V11.700 L6.700 6.700 Z" fill="#fff" stroke="#1e1e3c" stroke-width="1.300" stroke-linejoin="round"/></svg>
<svg style="left:29px;top:431.3px" width="24" height="20" viewBox="0 0 24 20"><path d="M3.100 5.700 H9 L10.200 3.300 H18.700 V16.100 H3.100 Z" fill="#dcb67a"/><rect x="10.800" y="4.400" width="7" height="1.300" fill="#f3e6cf"/></svg>
<span class="t" style="left:53px;top:433px;font-size:15px;color:#111;transform:scaleX(0.8530);">Assets</span>
<svg style="left:29px;top:452.7px" width="24" height="20" viewBox="0 0 24 20"><path d="M4.400 4.500 V11" stroke="#222" stroke-width="1.100" fill="none"/><path d="M4.400 11 V18.500" stroke="#222" stroke-width="1.100" stroke-dasharray="1.200 1" fill="none"/><path d="M4.400 7.800 H8 M7.700 8 V17.500 H10.500 M11 11.200 H12 M13.800 13.500 V17.500 H16.500 M8 11 H11" stroke="#222" stroke-width="1.100" fill="none"/><g fill="#0b6c96"><ellipse cx="4.500" cy="4.200" rx="2" ry="1.300"/><ellipse cx="8.100" cy="7.600" rx="1.900" ry="1.300"/><ellipse cx="11.500" cy="11" rx="1.900" ry="1.300"/><ellipse cx="15.200" cy="13.500" rx="1.900" ry="1.300"/><ellipse cx="10.700" cy="17.400" rx="1.500" ry="1.200"/><ellipse cx="16.800" cy="17.400" rx="1.500" ry="1.200"/></g></svg>
<span class="t" style="left:53px;top:455px;font-size:15px;color:#111;transform:scaleX(0.9572);">Logical Model</span>
<svg style="left:15px;top:479.6px" width="10" height="10" viewBox="0 0 10 10"><path d="M8.700 1 V8.400 H1.300 Z" fill="#16163a"/></svg>
<svg style="left:29px;top:474.1px" width="24" height="20" viewBox="0 0 24 20"><path d="M4.3 6.300 L9.700 4.800 L11.200 3.400 H19.300 V15.600 H5.600 Z" fill="#f6f2ec" stroke="#e3c491" stroke-width="1"/><path d="M5 10.200 H14.500 L17.400 15.800 H5.800 Z" fill="#dcb67a"/></svg>
<span class="t" style="left:53px;top:476px;font-size:15px;color:#111;transform:scaleX(0.9761);">I/O Configuration</span>
<svg style="left:37px;top:501.1px" width="10" height="10" viewBox="0 0 10 10"><path d="M8.700 1 V8.400 H1.300 Z" fill="#16163a"/></svg>
<svg style="left:51px;top:495.6px" width="24" height="20" viewBox="0 0 24 20"><path d="M2.700 4.300 H19.900 V12.500 L17.400 15 H0.700 V6.400 Z" fill="#000"/><path d="M3.500 5.900 H17" stroke="#9a9a9a" stroke-width="0.700" stroke-dasharray="1 0.600"/><rect x="4.500" y="8.600" width="11" height="2.300" fill="#c4c4c4"/><path d="M5.500 8.600 v1.500 M7.300 8.600 v1.500 M9.100 8.600 v1.500 M10.900 8.600 v1.500 M12.700 8.600 v1.500 M14.500 8.600 v1.500" stroke="#000" stroke-width="0.800"/><path d="M3.500 13.100 H16" stroke="#8a8a8a" stroke-width="0.700"/></svg>
<span class="t" style="left:75px;top:498px;font-size:15px;color:#111;transform:scaleX(0.8736);">1756 </span>
<span class="t" style="left:107.8px;top:498px;font-size:15px;color:#111;transform:scaleX(0.9121);">Backplane, </span>
<span class="t" style="left:179.3px;top:498px;font-size:15px;color:#111;transform:scaleX(0.8886);">1756-A7</span>
<svg style="left:74px;top:517.0px" width="24" height="20" viewBox="0 0 24 20"><path d="M13.700 2.800 H7.300 V16.600 H13.700" fill="none" stroke="#5a5a5a" stroke-width="1.300"/><path d="M7 2.700 H13.700" stroke="#2a2a2a" stroke-width="1.300"/><rect x="7.900" y="4.300" width="1.300" height="1.200" fill="#2bbf2b"/><rect x="11.200" y="5.900" width="7.200" height="7.600" rx="0.800" fill="#fff" stroke="#5a5a5a" stroke-width="1.300"/><path d="M15.800 8 V11.400 L13.200 9.700 Z" fill="#2a2ab0"/></svg>
<span class="t" style="left:98px;top:519px;font-size:15px;color:#111;transform:scaleX(0.9780);">[0] </span>
<span class="t" style="left:118.4px;top:519px;font-size:15px;color:#111;transform:scaleX(0.8866);">1756-L75 </span>
<span class="t" style="left:178.3px;top:519px;font-size:15px;color:#111;transform:scaleX(0.8812);">iS7AoiSampleRev1</span>
<svg style="left:60px;top:543.9px" width="10" height="10" viewBox="0 0 10 10"><path d="M8.700 1 V8.400 H1.300 Z" fill="#16163a"/></svg>
<svg style="left:74px;top:538.4px" width="24" height="20" viewBox="0 0 24 20"><path d="M6.800 3.300 L10.300 0.700 H15 L12.800 3.300 Z" fill="#b5b5b5"/><path d="M12.800 3.300 L15 0.700 V15.900 L12.800 18.400 Z" fill="#1f1f1f"/><rect x="6.800" y="3.300" width="6" height="15.100" fill="#a8a8a8"/><rect x="6.800" y="3.300" width="6" height="4.400" fill="#1a1a1a"/><rect x="8.200" y="4.200" width="2.700" height="2.500" fill="#21c13a"/><rect x="7.600" y="8.300" width="4.400" height="4.700" fill="#bdbdbd"/><rect x="7.600" y="13.600" width="4.400" height="3.200" fill="#f2f2f2"/><path d="M6.800 18.400 H12.800" stroke="#1f1f1f" stroke-width="0.800"/></svg>
<span class="t" style="left:98px;top:540px;font-size:15px;color:#111;transform:scaleX(0.9780);">[1] </span>
<span class="t" style="left:118.4px;top:540px;font-size:15px;color:#111;transform:scaleX(0.8602);">1756-EN2TR </span>
<span class="t" style="left:197.3px;top:540px;font-size:15px;color:#111;transform:scaleX(0.7763);">EN2TR_S1</span>
<svg style="left:83px;top:565.3px" width="10" height="10" viewBox="0 0 10 10"><path d="M8.700 1 V8.400 H1.300 Z" fill="#16163a"/></svg>
<svg style="left:97px;top:559.8px" width="24" height="20" viewBox="0 0 24 20"><path d="M9.600 6.400 V9.600 M5.900 9.600 V13.400 M14.700 9.600 V13.400 M1.800 9.600 H18.800" stroke="#1a1aff" stroke-width="1.300" fill="none"/><rect x="6.800" y="2.100" width="5.800" height="4.300" fill="#f7ef00" stroke="#111" stroke-width="1.200"/><rect x="3.100" y="13.400" width="5.800" height="3.700" fill="#f7ef00" stroke="#111" stroke-width="1.200"/><rect x="11.600" y="13.400" width="5.800" height="3.700" fill="#f7ef00" stroke="#111" stroke-width="1.200"/></svg>
<span class="t" style="left:121px;top:562px;font-size:15px;color:#111;transform:scaleX(0.9080);">Ethernet</span>
<svg style="left:119px;top:581.2px" width="24" height="20" viewBox="0 0 24 20"><rect x="7" y="3.100" width="7.200" height="14.500" fill="#2b2b2b"/><rect x="14" y="4.700" width="1.800" height="4.400" fill="#111"/><path d="M13 2.200 l1 1" stroke="#222" stroke-width="1"/><path d="M9.500 4.500 V16.500 M11.500 5 V16" stroke="#4a4a4a" stroke-width="0.900"/></svg>
<span class="t" style="left:143px;top:583px;font-size:15px;color:#111;transform:scaleX(0.8392);">0103_000C_0BB9 </span>
<span class="t" style="left:249.4px;top:583px;font-size:15px;color:#111;transform:scaleX(0.7466);">BSSRT_4</span>
<svg style="left:119px;top:602.7px" width="24" height="20" viewBox="0 0 24 20"><rect x="7" y="3.100" width="7.200" height="14.500" fill="#2b2b2b"/><rect x="14" y="4.700" width="1.800" height="4.400" fill="#111"/><path d="M13 2.200 l1 1" stroke="#222" stroke-width="1"/><path d="M9.500 4.500 V16.500 M11.500 5 V16" stroke="#4a4a4a" stroke-width="0.900"/></svg>
<span class="t" style="left:143px;top:605px;font-size:15px;color:#111;transform:scaleX(0.8392);">0103_000C_0BB9 </span>
<span class="t" style="left:249.4px;top:605px;font-size:15px;color:#111;transform:scaleX(0.7436);">BSSRT_5</span>
<svg style="left:119px;top:624.1px" width="24" height="20" viewBox="0 0 24 20"><rect x="8.200" y="1.900" width="4.700" height="17" fill="#2b2b2b"/><path d="M10.500 3.500 V17.500" stroke="#5a5a5a" stroke-width="1.200" stroke-dasharray="2 1.500"/></svg>
<span class="t" style="left:143px;top:626px;font-size:15px;color:#111;transform:scaleX(0.8448);">0103_000C_07D1 </span>
<span class="t" style="left:249.4px;top:626px;font-size:15px;color:#111;transform:scaleX(0.8080);">DBDT</span>
<svg style="left:119px;top:645.5px" width="24" height="20" viewBox="0 0 24 20"><path d="M6.800 3.300 L10.300 0.700 H15 L12.800 3.300 Z" fill="#b5b5b5"/><path d="M12.800 3.300 L15 0.700 V15.900 L12.800 18.400 Z" fill="#1f1f1f"/><rect x="6.800" y="3.300" width="6" height="15.100" fill="#a8a8a8"/><rect x="6.800" y="3.300" width="6" height="4.400" fill="#1a1a1a"/><rect x="8.200" y="4.200" width="2.700" height="2.500" fill="#21c13a"/><rect x="7.600" y="8.300" width="4.400" height="4.700" fill="#bdbdbd"/><rect x="7.600" y="13.600" width="4.400" height="3.200" fill="#f2f2f2"/><path d="M6.800 18.400 H12.800" stroke="#1f1f1f" stroke-width="0.800"/></svg>
<span class="t" style="left:143px;top:648px;font-size:15px;color:#111;transform:scaleX(0.8613);">1756-EN2TR </span>
<span class="t" style="left:222px;top:648px;font-size:15px;color:#111;transform:scaleX(0.7802);">EN2TR_S1</span>
<svg style="left:60px;top:672.4px" width="10" height="10" viewBox="0 0 10 10"><path d="M8.700 1 V8.400 H1.300 Z" fill="#16163a"/></svg>
<svg style="left:74px;top:666.9px" width="24" height="20" viewBox="0 0 24 20"><path d="M6.800 3.300 L10.300 0.700 H15 L12.800 3.300 Z" fill="#b5b5b5"/><path d="M12.800 3.300 L15 0.700 V15.900 L12.800 18.400 Z" fill="#1f1f1f"/><rect x="6.800" y="3.300" width="6" height="15.100" fill="#a8a8a8"/><rect x="6.800" y="3.300" width="6" height="4.400" fill="#1a1a1a"/><rect x="8.200" y="4.200" width="2.700" height="2.500" fill="#21c13a"/><rect x="7.600" y="8.300" width="4.400" height="4.700" fill="#bdbdbd"/><rect x="7.600" y="13.600" width="4.400" height="3.200" fill="#f2f2f2"/><path d="M6.800 18.400 H12.800" stroke="#1f1f1f" stroke-width="0.800"/></svg>
<span class="t" style="left:98px;top:669px;font-size:15px;color:#111;transform:scaleX(0.9780);">[2] </span>
<span class="t" style="left:118.4px;top:669px;font-size:15px;color:#111;transform:scaleX(0.8602);">1756-EN2TR </span>
<span class="t" style="left:197.3px;top:669px;font-size:15px;color:#111;transform:scaleX(0.7868);">EN2TR_S2</span>
<svg style="left:83px;top:693.8px" width="10" height="10" viewBox="0 0 10 10"><path d="M8.700 1 V8.400 H1.300 Z" fill="#16163a"/></svg>
<svg style="left:97px;top:688.3px" width="24" height="20" viewBox="0 0 24 20"><path d="M9.600 6.400 V9.600 M5.900 9.600 V13.400 M14.700 9.600 V13.400 M1.800 9.600 H18.800" stroke="#1a1aff" stroke-width="1.300" fill="none"/><rect x="6.800" y="2.100" width="5.800" height="4.300" fill="#f7ef00" stroke="#111" stroke-width="1.200"/><rect x="3.100" y="13.400" width="5.800" height="3.700" fill="#f7ef00" stroke="#111" stroke-width="1.200"/><rect x="11.600" y="13.400" width="5.800" height="3.700" fill="#f7ef00" stroke="#111" stroke-width="1.200"/></svg>
<span class="t" style="left:121px;top:690px;font-size:15px;color:#111;transform:scaleX(0.9080);">Ethernet</span>
<div style="left:3px;top:709.5px;width:426px;height:21px;background:#bfccdb"></div>
<svg style="left:119px;top:709.8px" width="24" height="20" viewBox="0 0 24 20"><rect x="8.200" y="1.900" width="4.700" height="17" fill="#2b2b2b"/><path d="M10.500 3.500 V17.500" stroke="#5a5a5a" stroke-width="1.200" stroke-dasharray="2 1.500"/></svg>
<span class="t" style="left:143px;top:712px;font-size:15px;color:#111;transform:scaleX(0.8304);">0103_000C_03E9 </span>
<span class="t" style="left:246.9px;top:712px;font-size:15px;color:#111;transform:scaleX(0.8602);">EFMxB</span>
<svg style="left:119px;top:731.2px" width="24" height="20" viewBox="0 0 24 20"><path d="M6.800 3.300 L10.300 0.700 H15 L12.800 3.300 Z" fill="#b5b5b5"/><path d="M12.800 3.300 L15 0.700 V15.900 L12.800 18.400 Z" fill="#1f1f1f"/><rect x="6.800" y="3.300" width="6" height="15.100" fill="#a8a8a8"/><rect x="6.800" y="3.300" width="6" height="4.400" fill="#1a1a1a"/><rect x="8.200" y="4.200" width="2.700" height="2.500" fill="#21c13a"/><rect x="7.600" y="8.300" width="4.400" height="4.700" fill="#bdbdbd"/><rect x="7.600" y="13.600" width="4.400" height="3.200" fill="#f2f2f2"/><path d="M6.800 18.400 H12.800" stroke="#1f1f1f" stroke-width="0.800"/></svg>
<span class="t" style="left:143px;top:733px;font-size:15px;color:#111;transform:scaleX(0.9076);">PowerFlex </span>
<span class="t" style="left:211.1px;top:733px;font-size:15px;color:#111;transform:scaleX(0.8665);">525-E </span>
<span class="t" style="left:249.4px;top:733px;font-size:15px;color:#111;transform:scaleX(0.9732);">ddddd</span>
<svg style="left:119px;top:752.6px" width="24" height="20" viewBox="0 0 24 20"><path d="M6.800 3.300 L10.300 0.700 H15 L12.800 3.300 Z" fill="#b5b5b5"/><path d="M12.800 3.300 L15 0.700 V15.900 L12.800 18.400 Z" fill="#1f1f1f"/><rect x="6.800" y="3.300" width="6" height="15.100" fill="#a8a8a8"/><rect x="6.800" y="3.300" width="6" height="4.400" fill="#1a1a1a"/><rect x="8.200" y="4.200" width="2.700" height="2.500" fill="#21c13a"/><rect x="7.600" y="8.300" width="4.400" height="4.700" fill="#bdbdbd"/><rect x="7.600" y="13.600" width="4.400" height="3.200" fill="#f2f2f2"/><path d="M6.800 18.400 H12.800" stroke="#1f1f1f" stroke-width="0.800"/></svg>
<span class="t" style="left:143px;top:755px;font-size:15px;color:#111;transform:scaleX(0.8613);">1756-EN2TR </span>
<span class="t" style="left:222px;top:755px;font-size:15px;color:#111;transform:scaleX(0.7934);">EN2TR_S2</span>
<svg style="left:119px;top:774.0px" width="24" height="20" viewBox="0 0 24 20"><path d="M6.800 3.300 L10.300 0.700 H15 L12.800 3.300 Z" fill="#b5b5b5"/><path d="M12.800 3.300 L15 0.700 V15.900 L12.800 18.400 Z" fill="#1f1f1f"/><rect x="6.800" y="3.300" width="6" height="15.100" fill="#a8a8a8"/><rect x="6.800" y="3.300" width="6" height="4.400" fill="#1a1a1a"/><rect x="8.200" y="4.200" width="2.700" height="2.500" fill="#21c13a"/><rect x="7.600" y="8.300" width="4.400" height="4.700" fill="#bdbdbd"/><rect x="7.600" y="13.600" width="4.400" height="3.200" fill="#f2f2f2"/><path d="M6.800 18.400 H12.800" stroke="#1f1f1f" stroke-width="0.800"/></svg>
<span class="t" style="left:143px;top:776px;font-size:15px;color:#111;transform:scaleX(0.8679);">ETHERNET-MODULE </span>
<span class="t" style="left:276.1px;top:776px;font-size:15px;color:#111;transform:scaleX(0.7930);">BSSRT_DC32A</span>
<div style="left:102px;top:702px;width:225px;height:32px;border:4px solid #fe0000"></div>
<div style="left:432px;top:158px;width:1084px;height:28px;background:#293955"></div>
<div style="left:432px;top:186px;width:7px;height:608px;background:#293955"></div>
<svg style="left:446px;top:164px" width="20" height="17" viewBox="0 0 20 17"><defs><linearGradient id="tg" x1="0" y1="0" x2="0" y2="1"><stop offset="0" stop-color="#2f6fb0"/><stop offset="1" stop-color="#3c9a5a"/></linearGradient><linearGradient id="tg2" x1="0" y1="0" x2="0" y2="1"><stop offset="0" stop-color="#3a78c0"/><stop offset="1" stop-color="#8fd08f"/></linearGradient></defs><rect x="0.800" y="1.500" width="17.900" height="13.900" fill="#f1f1ec"/><rect x="2.800" y="3.900" width="6.400" height="9.100" fill="url(#tg)"/><rect x="10" y="3.900" width="3.500" height="9.100" fill="#dcdcdc"/><rect x="14.700" y="3.900" width="2.800" height="5.100" fill="url(#tg2)"/></svg>
<span class="t" style="left:468.5px;top:167px;font-size:14px;color:#fff;transform:scaleX(1.0339);-webkit-text-stroke:0.250px #fff;">Module </span>
<span class="t" style="left:520px;top:167px;font-size:14px;color:#fff;transform:scaleX(0.9601);-webkit-text-stroke:0.250px #fff;">Properties </span>
<span class="t" style="left:585px;top:167px;font-size:14px;color:#fff;transform:scaleX(0.9757);-webkit-text-stroke:0.250px #fff;">Report: </span>
<span class="t" style="left:633.6px;top:167px;font-size:14px;color:#fff;transform:scaleX(0.8540);-webkit-text-stroke:0.250px #fff;">EN2TR_S2 </span>
<span class="t" style="left:697.4px;top:167px;font-size:14px;color:#fff;transform:scaleX(0.8857);-webkit-text-stroke:0.250px #fff;">(ETHERNET-MODULE </span>
<span class="t" style="left:828.3px;top:167px;font-size:14px;color:#fff;transform:scaleX(0.8488);-webkit-text-stroke:0.250px #fff;">1.001)</span>
<svg style="left:876px;top:163px" width="18" height="18" viewBox="0 0 18 18"><path d="M1.800 10 L10.100 2.500 H16.100 V8.800 L8.100 16.800 Z" fill="#f7f35a" stroke="#e4e4e4" stroke-width="1.400" stroke-linejoin="round"/></svg>
<span class="t" style="left:897.5px;top:167px;font-size:14px;color:#fff;transform:scaleX(0.9924);-webkit-text-stroke:0.250px #fff;">Controller </span>
<span class="t" style="left:961.6px;top:167px;font-size:14px;color:#fff;transform:scaleX(0.9292);-webkit-text-stroke:0.250px #fff;">Tags </span>
<span class="t" style="left:992.7px;top:167px;font-size:14px;color:#fff;transform:scaleX(1.0861);-webkit-text-stroke:0.250px #fff;">- </span>
<span class="t" style="left:1002px;top:167px;font-size:14px;color:#fff;transform:scaleX(0.9438);-webkit-text-stroke:0.250px #fff;">iS7AoiSampleRev1(controller)</span>
<svg style="left:1192.5px;top:162.7px" width="24" height="20" viewBox="0 0 24 20"><path d="M6.800 3.300 L10.300 0.700 H15 L12.800 3.300 Z" fill="#b5b5b5"/><path d="M12.800 3.300 L15 0.700 V15.900 L12.800 18.400 Z" fill="#1f1f1f"/><rect x="6.800" y="3.300" width="6" height="15.100" fill="#a8a8a8"/><rect x="6.800" y="3.300" width="6" height="4.400" fill="#1a1a1a"/><rect x="8.200" y="4.200" width="2.700" height="2.500" fill="#21c13a"/><rect x="7.600" y="8.300" width="4.400" height="4.700" fill="#bdbdbd"/><rect x="7.600" y="13.600" width="4.400" height="3.200" fill="#f2f2f2"/><path d="M6.800 18.400 H12.800" stroke="#1f1f1f" stroke-width="0.800"/></svg>
<span class="t" style="left:1215px;top:167px;font-size:14px;color:#fff;transform:scaleX(1.0299);-webkit-text-stroke:0.250px #fff;">Module </span>
<span class="t" style="left:1266.3px;top:167px;font-size:14px;color:#fff;transform:scaleX(0.9512);-webkit-text-stroke:0.250px #fff;">Properties: </span>
<span class="t" style="left:1334.4px;top:167px;font-size:14px;color:#fff;transform:scaleX(0.9297);-webkit-text-stroke:0.250px #fff;">Local:2 </span>
<span class="t" style="left:1380px;top:167px;font-size:14px;color:#fff;transform:scaleX(0.9206);-webkit-text-stroke:0.250px #fff;">(1756-EN2TR </span>
<span class="t" style="left:1463.1px;top:167px;font-size:14px;color:#fff;transform:scaleX(0.8403);-webkit-text-stroke:0.250px #fff;">10.010)</span>
<div style="left:439px;top:185.5px;width:1077px;height:609px;background:#eef0f8"></div>
<div style="left:442px;top:187.5px;width:1074px;height:607px;background:#6d6d6d"></div>
<div style="left:444px;top:189.5px;width:1072px;height:605px;background:#fff"></div>
<div style="left:445px;top:190.5px;width:1071px;height:604px;background:#f0f0f0"></div>
<div style="left:457.5px;top:202.5px;width:207px;height:530px;background:#fff;border:2px solid #6d6d6d;border-right:1px solid #fff;border-bottom:1px solid #fff"></div>
<div style="left:486px;top:205.5px;width:48px;height:18px;background:#efefef"></div>
<span class="t" style="left:487.9px;top:207px;font-size:14px;transform:scaleX(0.8693);">General</span>
<div style="left:475px;top:214px;width:10px;height:1px;background:repeating-linear-gradient(90deg,#8a8a8a 0 1px,transparent 1px 2px)"></div>
<span class="t" style="left:487.9px;top:226px;font-size:14px;transform:scaleX(0.8994);">Connection</span>
<div style="left:475px;top:233px;width:10px;height:1px;background:repeating-linear-gradient(90deg,#8a8a8a 0 1px,transparent 1px 2px)"></div>
<span class="t" style="left:487.9px;top:245px;font-size:14px;transform:scaleX(0.9020);">Module Info</span>
<div style="left:475px;top:252px;width:10px;height:1px;background:repeating-linear-gradient(90deg,#8a8a8a 0 1px,transparent 1px 2px)"></div>
<span class="t" style="left:487.9px;top:264px;font-size:14px;transform:scaleX(0.8994);">Internet Protocol</span>
<div style="left:475px;top:271px;width:10px;height:1px;background:repeating-linear-gradient(90deg,#8a8a8a 0 1px,transparent 1px 2px)"></div>
<span class="t" style="left:487.9px;top:282px;font-size:14px;transform:scaleX(0.8818);">Port Configuration</span>
<div style="left:475px;top:290px;width:10px;height:1px;background:repeating-linear-gradient(90deg,#8a8a8a 0 1px,transparent 1px 2px)"></div>
<div style="left:474px;top:214px;width:1px;height:77px;background:repeating-linear-gradient(180deg,#8a8a8a 0 1px,transparent 1px 2px)"></div>
<div style="left:679px;top:202.5px;width:818px;height:23.5px;background:linear-gradient(#d3deeb 0%,#a9bfd9 55%,#a9bfd9 60%,#cfdbe9 100%)"></div>
<span class="t" style="left:680px;top:205px;font-size:16px;font-weight:bold;transform:scaleX(0.9900);">General</span>
<span class="t" style="left:692.4px;top:253px;font-size:14px;transform:scaleX(0.8934);">Type:</span>
<span class="t" style="left:789.3px;top:253px;font-size:14px;transform:scaleX(0.8899);">XGL-EFMTB</span>
<span class="t" style="left:692.4px;top:282px;font-size:14px;transform:scaleX(0.8930);">Vendor:</span>
<span class="t" style="left:786.3px;top:282px;font-size:14px;transform:scaleX(0.8708);">LS Industrial Systems</span>
<span class="t" style="left:692.4px;top:310px;font-size:14px;transform:scaleX(0.8773);">Parent:</span>
<span class="t" style="left:786.3px;top:310px;font-size:14px;transform:scaleX(0.9250);">EN2TR_S2</span>
<span class="t" style="left:692.4px;top:343px;font-size:14px;transform:scaleX(0.8634);">Na<u>m</u>e:</span>
<span class="t" style="left:692.4px;top:377px;font-size:14px;transform:scaleX(0.8874);">Descri<u>p</u>tion:</span>
<div style="left:786px;top:338px;width:324px;height:25px;background:#fff;border:1px solid #0078d7"></div>
<div style="left:790.5px;top:342px;width:41.5px;height:15px;background:#0078d7"></div>
<span class="t" style="left:791px;top:342px;font-size:14px;color:#d9ecff;transform:scaleX(0.8825);">EFMxB</span>
<div style="left:786px;top:376px;width:324px;height:121px;background:#fff;border:1px solid #7a7a7a"></div>
<div style="left:1088.5px;top:378.5px;width:18.5px;height:116.5px;background:#f0f0f0"></div>
<svg style="left:1090.4px;top:385px" width="14" height="9" viewBox="0 0 14 9"><path d="M2 7 l5 -5 l5 5" fill="none" stroke="#bcbcbc" stroke-width="1.600"/></svg>
<svg style="left:1090.4px;top:480.7px" width="14" height="9" viewBox="0 0 14 9"><path d="M2 2 l5 5 l5 -5" fill="none" stroke="#bcbcbc" stroke-width="1.600"/></svg>
<div style="left:1123px;top:345.5px;width:361px;height:173px;border:1px solid #dcdcdc"></div>
<div style="left:1131px;top:338px;width:101px;height:16px;background:#f0f0f0"></div>
<span class="t" style="left:1133.8px;top:340px;font-size:14px;transform:scaleX(0.8929);">Ethernet Address</span>
<svg style="left:1135.5px;top:369.1px" width="16" height="16" viewBox="0 0 16 16"><circle cx="8" cy="8" r="6.800" fill="#fff" stroke="#333" stroke-width="1.200"/><circle cx="8" cy="8" r="3.900" fill="#333"/></svg>
<svg style="left:1135.5px;top:407.1px" width="16" height="16" viewBox="0 0 16 16"><circle cx="8" cy="8" r="6.800" fill="#fff" stroke="#333" stroke-width="1.200"/></svg>
<svg style="left:1135.5px;top:445.3px" width="16" height="16" viewBox="0 0 16 16"><circle cx="8" cy="8" r="6.800" fill="#fff" stroke="#333" stroke-width="1.200"/></svg>
<span class="t" style="left:1155.4px;top:370px;font-size:14px;transform:scaleX(0.9182);">P<u>r</u>ivate Network:</span>
<span class="t" style="left:1155.4px;top:408px;font-size:14px;transform:scaleX(0.8943);"><u>I</u>P Address:</span>
<span class="t" style="left:1155.4px;top:446px;font-size:14px;transform:scaleX(0.8928);"><u>H</u>ost Name:</span>
<span class="t" style="left:1292.6px;top:370px;font-size:14px;transform:scaleX(0.9098);">192.168.1.</span>
<div style="left:1357.5px;top:364px;width:41px;height:25.5px;background:#fff;border:1px solid #7a7a7a"></div>
<div style="left:1398px;top:364px;width:21.5px;height:25.5px;background:#f0f0f0;border:1px solid #c4c4c4"></div>
<div style="left:1400px;top:366px;width:17.5px;height:10.5px;background:#e6e6e6;border:1px solid #d0d0d0"></div>
<div style="left:1400px;top:377px;width:17.5px;height:10.5px;background:#e6e6e6;border:1px solid #d0d0d0"></div>
<svg style="left:1404px;top:368.5px" width="10" height="6" viewBox="0 0 10 6"><path d="M1.500 5.500 h7 l-3.500 -4 z" fill="#111"/></svg>
<svg style="left:1404px;top:379.5px" width="10" height="6" viewBox="0 0 10 6"><path d="M1.500 0.500 h7 l-3.500 4 z" fill="#111"/></svg>
<span class="t" style="left:1378.5px;top:368px;font-size:14px;transform:scaleX(0.9436);">10</span>
<div style="left:1292px;top:402px;width:179px;height:25px;background:#f0f0f0;border:1px solid #7a7a7a;box-shadow:inset 0 0 0 1px #fff"></div>
<div style="left:1338.7px;top:417px;width:1.5px;height:1.5px;background:#8a8a8a"></div>
<div style="left:1381.4px;top:417px;width:1.5px;height:1.5px;background:#8a8a8a"></div>
<div style="left:1424.3px;top:417px;width:1.5px;height:1.5px;background:#8a8a8a"></div>
<div style="left:1292px;top:440.5px;width:179px;height:24.5px;background:#f0f0f0;border:1px solid #d6d6d6;box-shadow:inset 0 0 0 1px #fff"></div>
<div style="left:692px;top:518px;width:417.5px;height:200.5px;border:1px solid #dcdcdc"></div>
<div style="left:700px;top:510px;width:102px;height:16px;background:#f0f0f0"></div>
<span class="t" style="left:703px;top:512px;font-size:14px;transform:scaleX(0.8939);">Module Definition</span>
<span class="t" style="left:705.2px;top:538px;font-size:14px;transform:scaleX(0.9029);">Revision:</span>
<span class="t" style="left:888.8px;top:538px;font-size:14px;transform:scaleX(0.8902);">1.001</span>
<span class="t" style="left:705.2px;top:566px;font-size:14px;transform:scaleX(0.8995);">Electronic Keying:</span>
<span class="t" style="left:887.9px;top:566px;font-size:14px;transform:scaleX(0.8879);">Compatible Module</span>
<span class="t" style="left:707.7px;top:598px;font-size:13.5px;transform:scaleX(0.9478);">Connections:</span>
<span class="t" style="left:886.3px;top:598px;font-size:13.5px;transform:scaleX(0.9502);">Input Only, Input Assembly Insta...</span>
<div style="left:1002.5px;top:681px;width:93.5px;height:25px;background:#e1e1e1;border:2px solid #0078d7"></div>
<span class="t" style="left:1019px;top:687px;font-size:14px;transform:scaleX(0.9132);">Chan<u>g</u>e ...</span>
<span class="t" style="left:457.5px;top:752px;font-size:14px;transform:scaleX(0.8900);">Status:  Offline</span>
<div style="left:1101.5px;top:747.5px;width:87.0px;height:25px;background:#e1e1e1;border:1px solid #adadad"></div>
<span class="t" style="left:1135px;top:753px;font-size:14px;transform:scaleX(0.9637);">OK</span>
<div style="left:1203.5px;top:747.5px;width:87.5px;height:25px;background:#e1e1e1;border:1px solid #adadad"></div>
<span class="t" style="left:1227px;top:753px;font-size:14px;transform:scaleX(0.9176);">Cancel</span>
<div style="left:1306px;top:747.5px;width:87.5px;height:25px;background:#cccccc;border:1px solid #bfbfbf"></div>
<span class="t" style="left:1334px;top:753px;font-size:14px;color:#838383;transform:scaleX(0.8707);"><u>A</u>pply</span>
<div style="left:1408.5px;top:747.5px;width:87.5px;height:25px;background:#e1e1e1;border:1px solid #adadad"></div>
<span class="t" style="left:1438.5px;top:753px;font-size:14px;transform:scaleX(0.9202);">Help</span>
<div style="left:1511px;top:160.8px;width:5px;height:26px;background:#fff29d"></div>
</body></html>
